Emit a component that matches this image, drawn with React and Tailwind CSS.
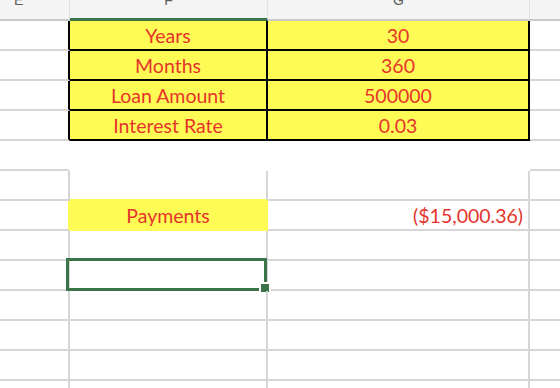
const GRID = "border-[#d6d6d6]";
const YELLOW = "bg-[#fffb55]";

const tableRows = [
    { label: "Years", value: "30" },
    { label: "Months", value: "360" },
    { label: "Loan Amount", value: "500000" },
    { label: "Interest Rate", value: "0.03" },
];

function HeaderRow() {
    return (
        <div className="flex h-[21px] bg-[#f4f4f4] text-[14px] leading-[14px] text-[#5c5c5c] font-['Liberation_Sans',sans-serif] overflow-hidden">
            <div className="w-[70px] shrink-0 border-b-2 border-r border-b-[#c9c9c9] border-r-[#e2e2e2] pl-[14px]">
                <div className="-mt-[7px]">E</div>
            </div>
            <div className="w-[198px] shrink-0 border-b-[3px] border-r border-b-[#3c7449] border-r-[#e2e2e2] flex justify-center">
                <div className="-mt-[7px]">F</div>
            </div>
            <div className="w-[262px] shrink-0 border-b-2 border-r border-b-[#c9c9c9] border-r-[#e2e2e2] flex justify-center">
                <div className="-mt-[7px]">G</div>
            </div>
            <div className="flex-1 border-b-2 border-[#c9c9c9]" />
        </div>
    );
}

function TableRow({ label, value }) {
    return (
        <div className="flex h-[30px]">
            <div className="w-[70px] shrink-0 border-b-2 border-r-2 border-b-[#d6d6d6] border-r-black" />
            <div className={`w-[198px] shrink-0 ${YELLOW} border-b-2 border-r-2 border-black text-center leading-[26px] pt-[2px]`}>
                {label}
            </div>
            <div className={`w-[262px] shrink-0 ${YELLOW} border-b-2 border-r-2 border-black text-center leading-[26px] pt-[2px]`}>
                {value}
            </div>
            <div className={`flex-1 border-b-2 ${GRID}`} />
        </div>
    );
}

function PlainRow({ fBottom = "border-b-[#d6d6d6]", children }) {
    return (
        <div className="flex h-[30px]">
            <div className={`w-[70px] shrink-0 border-b-2 border-r-2 ${GRID}`} />
            <div className={`w-[198px] shrink-0 border-b-2 border-r-2 border-r-[#d6d6d6] ${fBottom} relative`}>
                {children}
            </div>
            <div className={`w-[262px] shrink-0 border-b-2 border-r-2 ${GRID}`} />
            <div className={`flex-1 border-b-2 ${GRID}`} />
        </div>
    );
}

export default function App() {
    return (
        <div className="w-[560px] h-[388px] overflow-hidden bg-white font-['Lato',sans-serif] text-[19.5px] text-[#e5342b]">
            <HeaderRow />

            {tableRows.map((r) => (
                <TableRow key={r.label} label={r.label} value={r.value} />
            ))}

            {/* white-filled row, gridlines hidden */}
            <div className="flex h-[30px]">
                <div className="w-[70px] shrink-0 border-b-2 border-r-2 border-b-[#d6d6d6] border-r-white" />
                <div className="w-[198px] shrink-0 border-b-2 border-r-2 border-white" />
                <div className="w-[262px] shrink-0 border-b-2 border-r-2 border-white" />
                <div className={`flex-1 border-b-2 ${GRID}`} />
            </div>

            <PlainRow fBottom="border-b-[#fffb55]" />

            {/* payments */}
            <div className="flex h-[30px]">
                <div className="w-[70px] shrink-0 border-b-2 border-r-2 border-b-[#d6d6d6] border-r-[#fffb55]" />
                <div className={`w-[198px] shrink-0 ${YELLOW} border-b-2 border-r-2 border-[#fffb55] text-center leading-[26px] pt-[2px]`}>
                    Payments
                </div>
                <div className={`w-[262px] shrink-0 border-b-2 border-r-2 ${GRID} text-right pr-[5px] leading-[26px] pt-[2px]`}>
                    ($15,000.36)
                </div>
                <div className={`flex-1 border-b-2 ${GRID}`} />
            </div>

            <PlainRow />

            {/* selected cell */}
            <PlainRow>
                <div className="absolute -left-[4px] -top-[3px] -right-[1px] -bottom-[2px] border-[3px] border-[#3c7449]" />
                <div className="absolute -right-[5px] -bottom-[5px] w-[12px] h-[12px] bg-[#3c7449] border-2 border-white" />
            </PlainRow>

            <PlainRow />
            <PlainRow />
            <PlainRow />
            <PlainRow />
        </div>
    );
}
